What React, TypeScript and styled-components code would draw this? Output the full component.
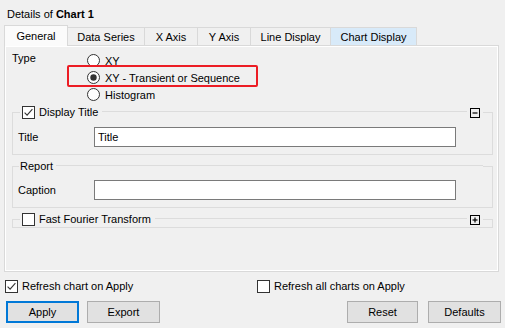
import React from "react";
import styled, { createGlobalStyle } from "styled-components";

const Global = createGlobalStyle`
  html, body { margin: 0; padding: 0; background: #f0f0f0; }
  body {
    font-family: "Liberation Sans", Arial, sans-serif;
    font-size: 11px;
    color: #000;
  }
`;

const Window = styled.div`
  width: 505px;
  height: 328px;
  background: #f0f0f0;
  overflow: hidden;
  display: flex;
  flex-direction: column;
`;

const Header = styled.div`
  height: 25px;
  box-sizing: border-box;
  padding: 7px 0 0 7px;
  line-height: 14px;
  b { font-weight: bold; }
`;

const TabBar = styled.div`
  display: flex;
  align-items: flex-end;
  height: 20px;
  margin-left: 4px;
  position: relative;
  z-index: 1;
`;

const Tab = styled.div<{ $w: number; $active?: boolean; $hover?: boolean }>`
  width: ${(p) => p.$w}px;
  height: ${(p) => (p.$active ? 21 : 18)}px;
  margin-bottom: ${(p) => (p.$active ? -1 : 0)}px;
  box-sizing: border-box;
  border: 1px solid #d9d9d9;
  border-bottom: none;
  margin-left: -1px;
  &:first-child { margin-left: 0; }
  background: ${(p) => (p.$active ? "#fbfbfb" : p.$hover ? "#d8eaf9" : "#f0f0f0")};
  position: relative;
  z-index: ${(p) => (p.$active ? 2 : 1)};
  display: flex;
  align-items: center;
  justify-content: center;
  padding-top: ${(p) => (p.$active ? 0 : 1)}px;
  white-space: nowrap;
`;

const Panel = styled.div`
  margin-left: 4px;
  width: 495px;
  height: 227px;
  box-sizing: border-box;
  border: 1px solid #d9d9d9;
  box-shadow: inset 0 0 0 1px #ffffff;
  background: #f0f0f0;
  position: relative;
  padding: 6px 0 0 0;
`;

const TypeRow = styled.div`
  display: flex;
  align-items: flex-start;
  padding-left: 7px;
`;

const TypeLabel = styled.div`
  width: 75px;
  line-height: 17px;
  margin-top: -2px;
`;

const RadioList = styled.div`
  display: flex;
  flex-direction: column;
`;

const OptionRow = styled.div<{ $h?: number }>`
  height: ${(p) => p.$h ?? 17}px;
  display: flex;
  align-items: center;
  gap: 5px;
  white-space: nowrap;
`;

const Highlight = styled.div`
  position: absolute;
  left: 62px;
  top: 19px;
  width: 191px;
  height: 22px;
  box-sizing: border-box;
  border: 2px solid #ec1c24;
  border-radius: 2px;
  pointer-events: none;
`;

const Groups = styled.div`
  margin: 3px 0 0 7px;
  width: 481px;
  display: flex;
  flex-direction: column;
`;

const Group = styled.div<{ $gap?: number }>`
  margin-top: ${(p) => p.$gap ?? 0}px;
  display: flex;
  flex-direction: column;
`;

const GroupHead = styled.div`
  height: 13px;
  display: flex;
  align-items: center;
`;

const CornerLeft = styled.div<{ $w: number }>`
  width: ${(p) => p.$w}px;
  height: 7px;
  align-self: flex-end;
  box-sizing: border-box;
  border-top: 1px solid #dcdcdc;
  border-left: 1px solid #dcdcdc;
`;

const CornerRight = styled.div`
  width: 10px;
  height: 7px;
  align-self: flex-end;
  box-sizing: border-box;
  border-top: 1px solid #dcdcdc;
  border-right: 1px solid #dcdcdc;
`;

const Line = styled.div`
  flex: 1;
  height: 7px;
  align-self: flex-end;
  border-top: 1px solid #dcdcdc;
`;

const Legend = styled.div<{ $pl: number; $pr: number }>`
  display: flex;
  align-items: center;
  gap: 4px;
  padding: 0 ${(p) => p.$pr}px 0 ${(p) => p.$pl}px;
  line-height: 13px;
  white-space: nowrap;
`;

const Toggle = styled.div`
  width: 10px;
  height: 10px;
  margin: 0 3px;
  display: flex;
`;

const GroupBody = styled.div<{ $pt: number; $pb: number }>`
  box-sizing: border-box;
  border: 1px solid #dcdcdc;
  border-top: none;
  padding: ${(p) => p.$pt}px 0 ${(p) => p.$pb}px 5px;
`;

const FieldRow = styled.div`
  display: flex;
  align-items: center;
`;

const FieldLabel = styled.div`
  width: 76px;
`;

const TextBox = styled.div`
  width: 362px;
  height: 20px;
  box-sizing: border-box;
  border: 1px solid #7a7a7a;
  background: #fff;
  padding-left: 3px;
  display: flex;
  align-items: center;
`;

const BottomChecks = styled.div`
  margin-top: 8px;
  padding-left: 5px;
  display: grid;
  grid-template-columns: 252px 1fr;
  height: 13px;
`;

const CheckItem = styled.div`
  display: flex;
  align-items: center;
  gap: 4px;
  line-height: 13px;
  white-space: nowrap;
`;

const ButtonRow = styled.div`
  margin-top: 8px;
  padding: 0 4px 0 6px;
  display: flex;
  align-items: center;
`;

const Spacer = styled.div`
  flex: 1;
`;

const Button = styled.div<{ $w: number; $primary?: boolean; $ml?: number }>`
  width: ${(p) => p.$w}px;
  height: 22px;
  margin-left: ${(p) => p.$ml ?? 0}px;
  box-sizing: border-box;
  border: ${(p) => (p.$primary ? "2px solid #0078d7" : "1px solid #adadad")};
  background: #e1e1e1;
  display: flex;
  align-items: center;
  justify-content: center;
`;

const CheckBox = ({ checked }: { checked?: boolean }) => (
  <svg width="13" height="13" viewBox="0 0 13 13" style={{ flex: "none" }}>
    <rect x="0.5" y="0.5" width="12" height="12" fill="#fff" stroke="#333" />
    {checked && (
      <path d="M2.6 6.6 L5.1 9.1 L10.4 3.2" fill="none" stroke="#333" strokeWidth="1.1" />
    )}
  </svg>
);

const Radio = ({ checked }: { checked?: boolean }) => (
  <svg width="13" height="13" viewBox="0 0 13 13" style={{ flex: "none" }}>
    <circle cx="6.5" cy="6.5" r="6" fill="#fff" stroke="#333" />
    {checked && <circle cx="6.5" cy="6.5" r="3.2" fill="#333" />}
  </svg>
);

const ToggleIcon = ({ plus }: { plus?: boolean }) => (
  <svg width="10" height="10" viewBox="0 0 10 10">
    <rect x="0.5" y="0.5" width="9" height="9" fill="none" stroke="#000" />
    <path d="M2.5 5 H7.5" stroke="#000" strokeWidth="1.2" />
    {plus && <path d="M5 2.5 V7.5" stroke="#000" strokeWidth="1.2" />}
  </svg>
);

const tabs = [
  { label: "General", w: 64, active: true },
  { label: "Data Series", w: 78 },
  { label: "X Axis", w: 54 },
  { label: "Y Axis", w: 54 },
  { label: "Line Display", w: 81 },
  { label: "Chart Display", w: 87, hover: true },
];

export default function App() {
  return (
    <Window>
      <Global />
      <Header>
        Details of <b>Chart 1</b>
      </Header>
      <TabBar>
        {tabs.map((t) => (
          <Tab key={t.label} $w={t.w} $active={t.active} $hover={t.hover}>
            {t.label}
          </Tab>
        ))}
      </TabBar>
      <Panel>
        <TypeRow>
          <TypeLabel>Type</TypeLabel>
          <RadioList>
            <OptionRow>
              <Radio />
              XY
            </OptionRow>
            <OptionRow>
              <Radio checked />
              XY - Transient or Sequence
            </OptionRow>
            <OptionRow>
              <Radio />
              Histogram
            </OptionRow>
          </RadioList>
        </TypeRow>
        <Highlight />
        <Groups>
          <Group>
            <GroupHead>
              <CornerLeft $w={8} />
              <Legend $pl={2} $pr={4}>
                <CheckBox checked />
                Display Title
              </Legend>
              <Line />
              <Toggle>
                <ToggleIcon />
              </Toggle>
              <CornerRight />
            </GroupHead>
            <GroupBody $pt={8} $pb={7}>
              <FieldRow>
                <FieldLabel>Title</FieldLabel>
                <TextBox>Title</TextBox>
              </FieldRow>
            </GroupBody>
          </Group>
          <Group $gap={5}>
            <GroupHead>
              <CornerLeft $w={7} />
              <Legend $pl={1} $pr={3}>
                Report
              </Legend>
              <Line />
              <CornerRight />
            </GroupHead>
            <GroupBody $pt={7} $pb={7}>
              <FieldRow>
                <FieldLabel>Caption</FieldLabel>
                <TextBox />
              </FieldRow>
            </GroupBody>
          </Group>
          <Group $gap={5}>
            <GroupHead>
              <CornerLeft $w={8} />
              <Legend $pl={2} $pr={4}>
                <CheckBox />
                Fast Fourier Transform
              </Legend>
              <Line />
              <Toggle>
                <ToggleIcon plus />
              </Toggle>
              <CornerRight />
            </GroupHead>
            <GroupBody $pt={1} $pb={0} />
          </Group>
        </Groups>
      </Panel>
      <BottomChecks>
        <CheckItem>
          <CheckBox checked />
          Refresh chart on Apply
        </CheckItem>
        <CheckItem>
          <CheckBox />
          Refresh all charts on Apply
        </CheckItem>
      </BottomChecks>
      <ButtonRow>
        <Button $w={73} $primary>
          Apply
        </Button>
        <Button $w={73} $ml={8}>
          Export
        </Button>
        <Spacer />
        <Button $w={71}>Reset</Button>
        <Button $w={73} $ml={10}>
          Defaults
        </Button>
      </ButtonRow>
    </Window>
  );
}
